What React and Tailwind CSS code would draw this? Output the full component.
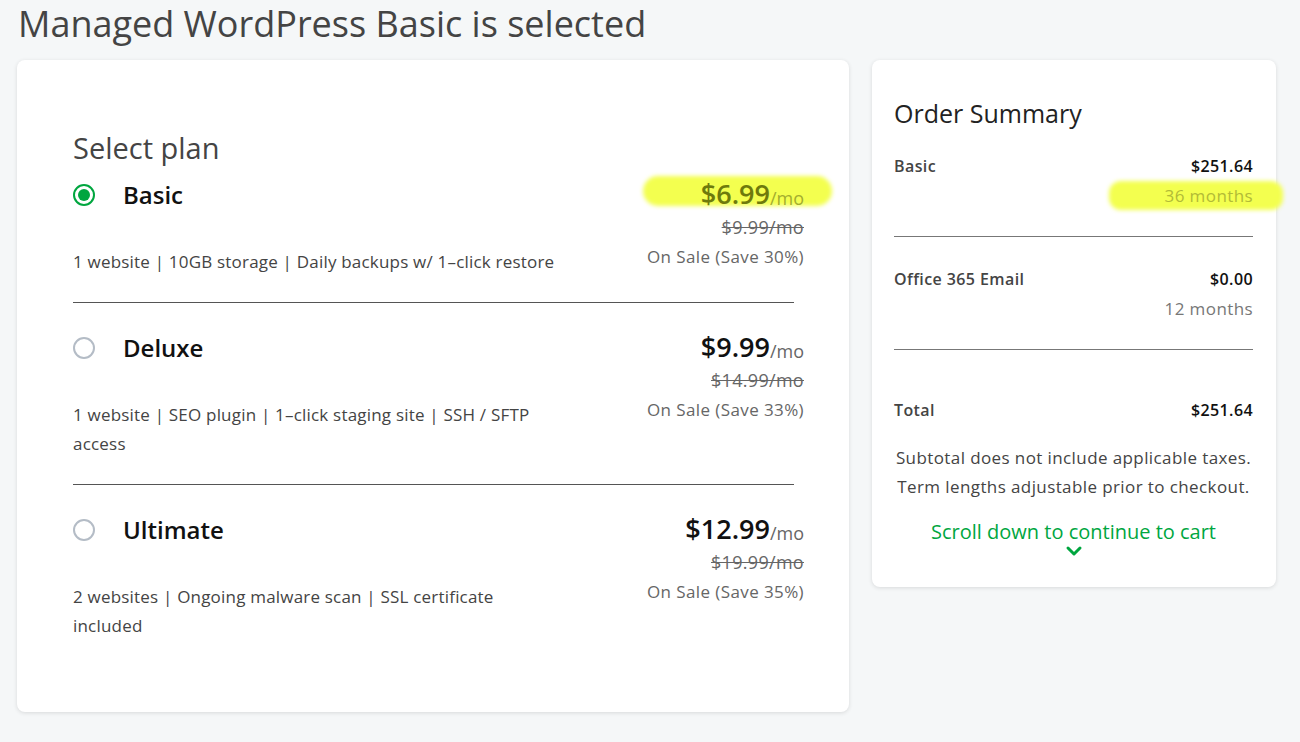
const plans = [
  {
    name: 'Basic',
    price: '$6.99',
    was: '$9.99/mo',
    save: 'On Sale (Save 30%)',
    desc: '1 website | 10GB storage | Daily backups w/ 1–click restore',
    selected: true,
  },
  {
    name: 'Deluxe',
    price: '$9.99',
    was: '$14.99/mo',
    save: 'On Sale (Save 33%)',
    desc: '1 website | SEO plugin | 1–click staging site | SSH / SFTP access',
  },
  {
    name: 'Ultimate',
    price: '$12.99',
    was: '$19.99/mo',
    save: 'On Sale (Save 35%)',
    desc: '2 websites | Ongoing malware scan | SSL certificate included',
  },
];

function Radio({ on }) {
  if (on) {
    return (
      <span className="w-[22px] h-[22px] rounded-full border-2 border-[#00a63f] flex items-center justify-center shrink-0">
        <span className="w-[12px] h-[12px] rounded-full bg-[#00a63f]" />
      </span>
    );
  }
  return <span className="block w-[22px] h-[22px] rounded-full border-2 border-[#b4bcc6] shrink-0" />;
}

function PlanRow({ plan, last }) {
  return (
    <div className={last ? '' : 'border-b border-[#555] mr-[10px]'}>
      <div className={'flex justify-between ' + (last ? '' : '-mr-[10px]')}>
        <div className="pt-[7px]">
          <div className="flex items-center h-[32px]">
            <Radio on={plan.selected} />
            <span className="ml-[28px] text-[24px] font-semibold text-[#111]">{plan.name}</span>
          </div>
          <p className="mt-[36px] max-w-[488px] text-[17px] tracking-[0.2px] leading-[29px] text-[#444]">{plan.desc}</p>
        </div>
        <div className="text-right relative">
          {plan.selected && (
            <div className="absolute -left-[4px] -right-[28px] top-[4px] h-[30px] rounded-full bg-[#f3ff4f] blur-[2px]" />
          )}
          <div className="relative h-[40px] flex items-end justify-end pb-[5px]">
            <span className={'text-[27px] leading-none font-semibold ' + (plan.selected ? 'text-[#6e7a0c]' : 'text-[#111]')}>
              {plan.price}
            </span>
            <span className={'text-[18px] leading-none ' + (plan.selected ? 'text-[#a3ad2e]' : 'text-[#666]')}>/mo</span>
          </div>
          <div className="text-[18px] tracking-[0.3px] leading-[30px] text-[#666] line-through">{plan.was}</div>
          <div className="text-[17px] tracking-[0.4px] leading-[30px] text-[#666]">{plan.save}</div>
        </div>
      </div>
      {!last && <div className="h-[26px]" />}
    </div>
  );
}

export default function App() {
  return (
    <div className="min-h-screen bg-[#f5f7f8] font-['Open_Sans',sans-serif] text-[#333]">
      <h1 className="pl-[18px] pt-[1px] text-[36px] leading-[46px] text-[#444]">Managed WordPress Basic is selected</h1>
      <div className="flex items-start gap-[23px] pl-[17px] pt-[13px]">
        <div className="w-[832px] h-[652px] bg-white rounded-[8px] shadow-[0_1px_4px_rgba(0,0,0,0.12)] pl-[56px] pr-[45px] pt-[70px]">
          <h2 className="text-[29px] leading-[36px] text-[#444] mb-[6px]">Select plan</h2>
          <div className="flex flex-col gap-[22px]">
            {plans.map((p, i) => (
              <PlanRow key={p.name} plan={p} last={i === plans.length - 1} />
            ))}
          </div>
        </div>

        <div className="w-[404px] bg-white rounded-[8px] shadow-[0_1px_4px_rgba(0,0,0,0.12)] pl-[22px] pr-[23px] pt-[36px] pb-[30px]">
          <h2 className="text-[25px] leading-[34px] text-[#222] mb-[22px]">Order Summary</h2>
          <div className="border-b border-[#777] pb-[26px]">
            <div className="flex justify-between text-[16px] tracking-[0.4px] leading-[29px]">
              <span className="font-semibold text-[#444]">Basic</span>
              <span className="font-semibold text-[#111]">$251.64</span>
            </div>
            <div className="flex justify-end">
              <span className="relative text-[17px] tracking-[0.4px] leading-[29px] text-[#b2bb36]">
                <span className="absolute -left-[56px] -right-[30px] top-0 bottom-0 rounded-[12px] bg-[#f3ff4f] blur-[2px]" />
                <span className="relative">36 months</span>
              </span>
            </div>
          </div>
          <div className="border-b border-[#777] pt-[28px] pb-[26px]">
            <div className="flex justify-between text-[16px] tracking-[0.4px] leading-[29px]">
              <span className="font-semibold text-[#444]">Office 365 Email</span>
              <span className="font-semibold text-[#111]">$0.00</span>
            </div>
            <div className="text-right text-[17px] tracking-[0.4px] leading-[29px] text-[#777]">12 months</div>
          </div>
          <div className="flex justify-between text-[16px] tracking-[0.4px] leading-[29px] mt-[46px]">
            <span className="font-semibold text-[#444]">Total</span>
            <span className="font-semibold text-[#111]">$251.64</span>
          </div>
          <p className="mt-[18px] text-center text-[17px] tracking-[0.4px] leading-[29px] text-[#444]">
            Subtotal does not include applicable taxes.
            <br />
            Term lengths adjustable prior to checkout.
          </p>
          <div className="mt-[18px] text-center text-[20px] leading-[26px] text-[#00a63f]">Scroll down to continue to cart</div>
          <div className="flex justify-center">
            <svg width="18" height="12" viewBox="0 0 18 12" fill="none">
              <path d="M3 3 L9 9 L15 3" stroke="#00a63f" strokeWidth="3" strokeLinecap="round" strokeLinejoin="round" />
            </svg>
          </div>
        </div>
      </div>
    </div>
  );
}
